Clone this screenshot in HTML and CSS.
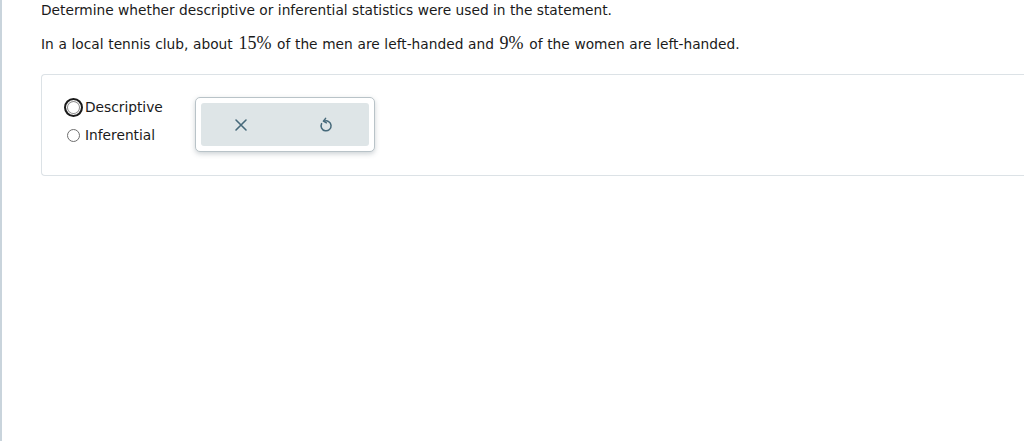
FILE: index.html
```html
<!DOCTYPE html>
<html>
<head>
<meta charset="utf-8">
<link rel="stylesheet" href="styles.css">
</head>
<body>
<div class="page">
  <p class="prompt">Determine whether descriptive or inferential statistics were used in the statement.</p>
  <p class="statement">In a local tennis club, about <span class="math">15%</span> of the men are left-handed and <span class="math">9%</span> of the women are left-handed.</p>
  <div class="answer-box">
    <div class="options">
      <label class="option"><span class="radio focused"></span><span class="opt-text">Descriptive</span></label>
      <label class="option"><span class="radio"></span><span class="opt-text second">Inferential</span></label>
    </div>
    <div class="tools">
      <div class="tools-inner">
        <span class="tool">
          <svg width="14" height="14" viewBox="0 0 14 14"><path d="M2 2 L12 12 M12 2 L2 12" stroke="#46697a" stroke-width="1.6" fill="none" stroke-linecap="round"/></svg>
        </span>
        <span class="tool">
          <svg width="14" height="16" viewBox="0 0 14 16"><path d="M5.2 4.2 A5 5 0 1 1 2.6 6.6" stroke="#46697a" stroke-width="1.5" fill="none" stroke-linecap="round"/><path d="M6.6 1.4 L4.4 4.2 L7.4 5.8" stroke="#46697a" stroke-width="1.5" fill="none" stroke-linecap="round" stroke-linejoin="round"/></svg>
        </span>
      </div>
    </div>
  </div>
</div>
</body>
</html>
```

FILE: styles.css
```css
html, body {
  margin: 0;
  padding: 0;
  background: #ffffff;
}
body {
  border-left: 2px solid #c9d4dc;
  min-height: 441px;
  box-sizing: border-box;
  font-family: "DejaVu Sans", Verdana, sans-serif;
  font-size: 13.75px;
  color: #1a1a1a;
}
.page {
  padding: 0 0 0 39px;
}
.prompt {
  margin: 0;
  padding-top: 2px;
  line-height: 16px;
}
.statement {
  margin: 16px 0 0 0;
  line-height: 18px;
  height: 18px;
  word-spacing: 0.3px;
}
.math {
  font-family: "Liberation Serif", "Times New Roman", serif;
  font-size: 18px;
  line-height: 18px;
  margin: 0 1px;
}
.answer-box {
  margin-top: 22px;
  border: 1px solid #dce2e6;
  border-right: none;
  border-radius: 4px 0 0 4px;
  height: 102px;
  display: flex;
  align-items: flex-start;
  box-sizing: border-box;
}
.options {
  display: flex;
  flex-direction: column;
  padding: 23px 0 0 21px;
  gap: 10px;
}
.option {
  display: flex;
  align-items: center;
  height: 18px;
}
.radio {
  width: 13px;
  height: 13px;
  border: 1px solid #6e6e6e;
  border-radius: 50%;
  box-sizing: border-box;
  margin: 0 7px 0 4px;
  background: #fff;
}
.radio.focused {
  width: 19px;
  height: 19px;
  margin: 0 2px 0 1px;
  border: 2px solid #1a1a1a;
  box-shadow: inset 0 0 0 1px #fff, inset 0 0 0 2px #8a8a8a;
}
.opt-text.second {
  margin-left: -2px;
}
.tools {
  margin: 22px 0 0 32px;
  border: 1px solid #b9c3c8;
  border-radius: 5px;
  padding: 5px;
  background: #fff;
  box-shadow: 0 2px 5px rgba(60, 80, 90, 0.25);
}
.tools-inner {
  width: 168px;
  height: 43px;
  background: #dee5e7;
  border-radius: 3px;
  display: flex;
  align-items: center;
  justify-content: space-between;
  padding: 0 33px 0 30px;
  box-sizing: border-box;
}
.tool {
  display: flex;
  align-items: center;
  justify-content: center;
  width: 20px;
  height: 20px;
}
```
